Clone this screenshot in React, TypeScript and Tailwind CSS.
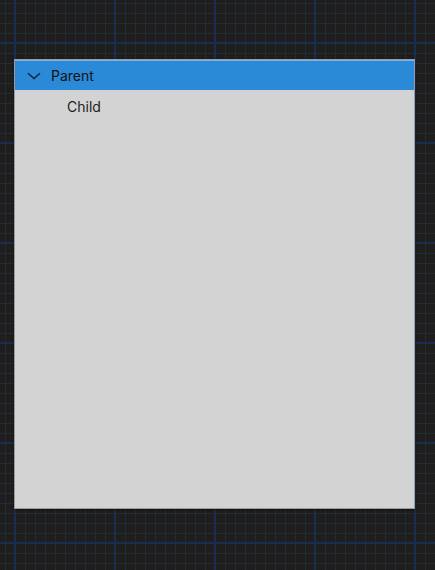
import React from 'react';

const TreeItem = ({ label }: { label: string }) => (
  <div className="h-[33px] flex items-center pl-[52px] text-[14px] text-[#1c1c1c]">
    {label}
  </div>
);

const App = () => {
  const [open, setOpen] = React.useState(true);

  return (
    <div
      className="w-full h-[570px] overflow-hidden pt-[59px] pl-[14px] bg-[#1e1e1e] bg-[linear-gradient(to_right,#1a2d50_2px,transparent_2px),linear-gradient(to_bottom,#1a2d50_2px,transparent_2px),linear-gradient(to_right,#262a31_1px,transparent_1px),linear-gradient(to_bottom,#262a31_1px,transparent_1px)] bg-[size:100px_100px,100px_100px,10px_10px,10px_10px] bg-[position:14px_42px,14px_42px,5px_3px,5px_3px]"
      style={{ fontFamily: 'Inter, "Noto Sans", sans-serif' }}
    >
      <div className="w-[401px] h-[450px] bg-[#d3d3d3] border border-[#9b9b9b] shadow-[0_1px_2px_rgba(0,0,0,0.5)] flex flex-col">
        {/* Parent row */}
        <button
          onClick={() => setOpen(!open)}
          className="h-[30px] bg-[#2b8ad7] border-t border-[#7fb3e3] flex items-center pl-[12px] gap-[10px] text-[14px] text-[#141414] text-left"
        >
          <svg width="14" height="8" viewBox="0 0 14 8" className={open ? '' : '-rotate-90'}>
            <path d="M1 1.2 L7 6.6 L13 1.2" fill="none" stroke="#14233d" strokeWidth="1.5" />
          </svg>
          <span>Parent</span>
        </button>

        {open && <TreeItem label="Child" />}
      </div>
    </div>
  );
};

export default App;
